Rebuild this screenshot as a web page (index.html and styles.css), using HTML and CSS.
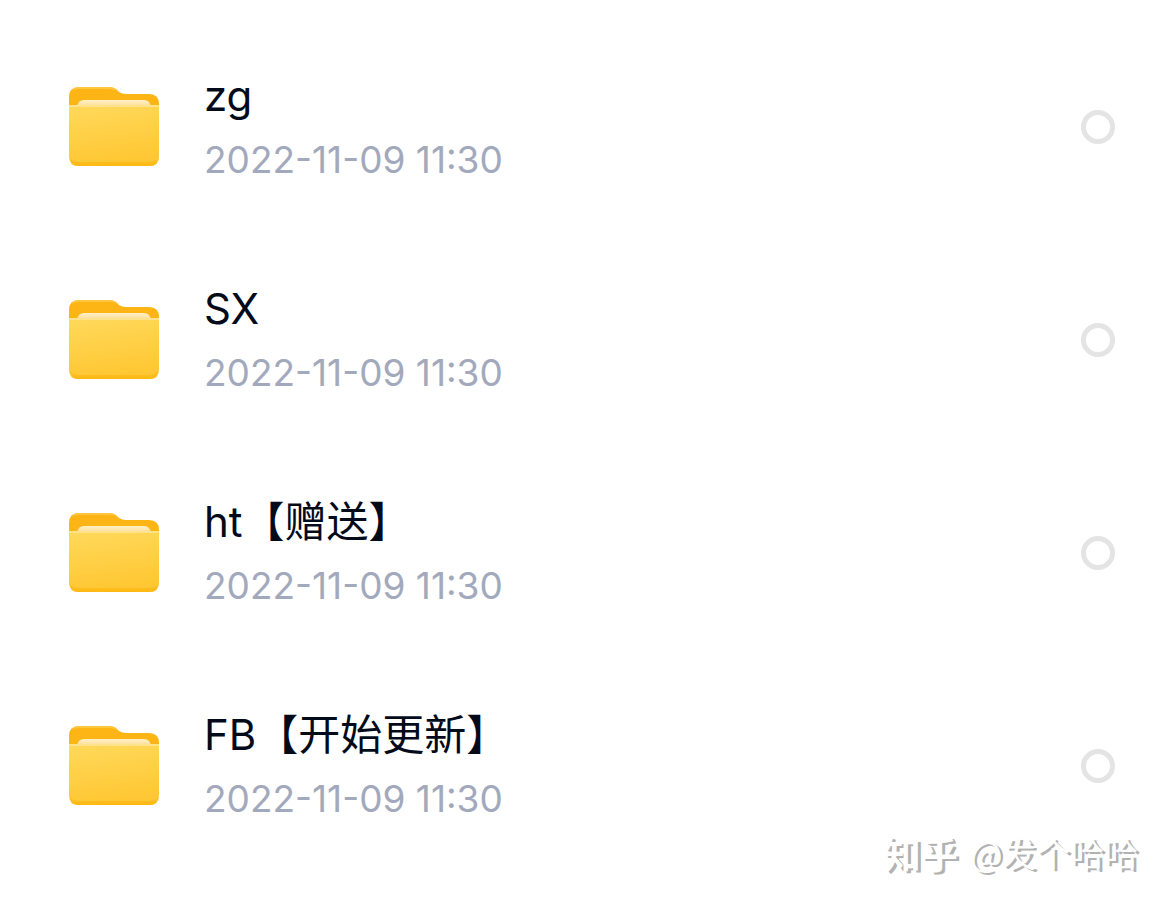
FILE: index.html
```
<!DOCTYPE html>
<html lang="zh-CN">
<head>
    <meta charset="UTF-8">
    <meta name="viewport" content="width=device-width, initial-scale=1">
    <title>文件列表</title>
    <link rel="stylesheet" href="styles.css">
</head>
<body>
    <!-- Shared folder icon -->
    <svg width="0" height="0" class="icon-defs" aria-hidden="true">
        <defs>
            <linearGradient id="folderFront" x1="0" y1="0" x2="0.2" y2="1">
                <stop offset="0" stop-color="#ffd95c"/>
                <stop offset="1" stop-color="#ffc733"/>
            </linearGradient>
            <linearGradient id="folderPaper" x1="0" y1="0" x2="0" y2="1">
                <stop offset="0" stop-color="#fff0c8"/>
                <stop offset="1" stop-color="#ffd680"/>
            </linearGradient>
            <linearGradient id="folderEdge" x1="0" y1="0" x2="0" y2="1">
                <stop offset="0" stop-color="#fdb813" stop-opacity="0"/>
                <stop offset="1" stop-color="#fdb813"/>
            </linearGradient>
            <symbol id="folder" viewBox="0 0 90 80">
                <path fill="#fdb515" d="M0 18V10Q0 0 10 0H40Q44 0 47 2L50 5Q53 7 57 7H80Q90 7 90 17V30H0Z"/>
                <path fill="#ffc640" d="M3 4Q5 0 10 0H40Q44 0 47 2L49 4Q45 2 40 2H10Q6 2 3 4Z"/>
                <path fill="url(#folderPaper)" d="M8 20Q9 13 15 13H75Q81 13 82 20V22H8Z"/>
                <path fill="url(#folderFront)" d="M0 18H90V69Q90 79 80 79H10Q0 79 0 69Z"/>
                <path fill="#ffe28c" d="M0 18H90V20H0Z"/>
                <path fill="url(#folderEdge)" d="M0 67Q1 75 10 75H80Q89 75 90 67V69Q90 79 80 79H10Q0 79 0 69Z"/>
            </symbol>
        </defs>
    </svg>

    <ul class="file-list">
        <li class="file-item">
            <svg class="file-icon" aria-hidden="true"><use href="#folder"/></svg>
            <label class="file-info" for="file1">
                <span class="file-name">zg</span>
                <span class="file-date">2022-11-09 11:30</span>
            </label>
            <input type="checkbox" class="file-check" id="file1">
        </li>
        <li class="file-item">
            <svg class="file-icon" aria-hidden="true"><use href="#folder"/></svg>
            <label class="file-info" for="file2">
                <span class="file-name">SX</span>
                <span class="file-date">2022-11-09 11:30</span>
            </label>
            <input type="checkbox" class="file-check" id="file2">
        </li>
        <li class="file-item">
            <svg class="file-icon" aria-hidden="true"><use href="#folder"/></svg>
            <label class="file-info" for="file3">
                <span class="file-name">ht【赠送】</span>
                <span class="file-date">2022-11-09 11:30</span>
            </label>
            <input type="checkbox" class="file-check" id="file3">
        </li>
        <li class="file-item">
            <svg class="file-icon" aria-hidden="true"><use href="#folder"/></svg>
            <label class="file-info" for="file4">
                <span class="file-name">FB【开始更新】</span>
                <span class="file-date">2022-11-09 11:30</span>
            </label>
            <input type="checkbox" class="file-check" id="file4">
        </li>
    </ul>

    <div class="watermark"><b>知乎</b><span>@发个哈哈</span></div>
</body>
</html>
```

FILE: styles.css
```
* {
    box-sizing: border-box;
}

body {
    position: relative;
    min-height: 100vh;
    margin: 0;
    background-color: #fff;
    font-family: Inter, "Noto Sans CJK SC", sans-serif;
}

.icon-defs {
    position: absolute;
}

.file-list {
    list-style: none;
    margin: 0;
    padding: 20px 55px 0 69px;
}

.file-item {
    display: flex;
    align-items: center;
    height: 213px;
}

.file-icon {
    flex: none;
    width: 90px;
    height: 80px;
}

.file-info {
    flex: 1;
    display: flex;
    flex-direction: column;
    gap: 12px;
    margin-left: 45px;
    padding-bottom: 2px;
}

.file-name {
    color: #030a1a;
    font-size: 42px;
    line-height: 56px;
}

.file-date {
    color: #a3a9bd;
    font-size: 37px;
    line-height: 48px;
}

.file-check {
    appearance: none;
    flex: none;
    width: 34px;
    height: 34px;
    margin: 0;
    border: 5px solid #e4e4e4;
    border-radius: 50%;
    background-color: #fff;
    cursor: pointer;
}

.file-check:checked {
    border-color: #fdb813;
}

/* Sits over the bottom right corner of the list */
.watermark {
    position: absolute;
    right: 32px;
    bottom: 26px;
    display: flex;
    align-items: center;
    gap: 12px;
    color: #fff;
    font-family: "Noto Sans CJK SC", sans-serif;
    font-size: 34px;
    line-height: 48px;
    text-shadow: 3px 2px 0 #b2b2b2;
}

.watermark b {
    font-size: 37px;
}
```
